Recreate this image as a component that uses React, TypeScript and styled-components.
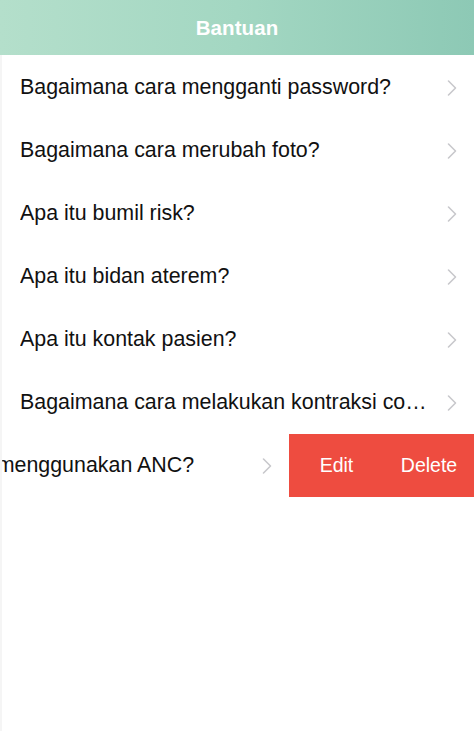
import React from "react";
import styled, { createGlobalStyle } from "styled-components";

const Global = createGlobalStyle`
  html, body { margin: 0; padding: 0; background: #ffffff; }
  body { font-family: "Liberation Sans", Arial, Helvetica, sans-serif; }
  * { box-sizing: border-box; }
`;

const Screen = styled.div`
  width: 474px;
  height: 731px;
  display: flex;
  flex-direction: column;
  background: #ffffff;
  overflow: hidden;
`;

const Header = styled.div`
  height: 55px;
  flex: 0 0 55px;
  display: flex;
  align-items: center;
  justify-content: center;
  background: linear-gradient(90deg, #b4dfcb 0%, #a3d7c2 50%, #8dc9b5 100%);
`;

const Title = styled.div`
  color: #ffffff;
  font-size: 20.5px;
  font-weight: 700;
  letter-spacing: 0.1px;
`;

const Body = styled.div`
  flex: 1;
  padding-top: 1px;
  border-left: 2px solid #f5f5f5;
  display: flex;
  flex-direction: column;
`;

const RowWrap = styled.div`
  position: relative;
  height: 63px;
  overflow: hidden;
`;

const Row = styled.div<{ $shift: number }>`
  height: 63px;
  display: flex;
  align-items: center;
  padding: 0 16px 0 18px;
  background: #ffffff;
  transform: translateX(${(p) => -p.$shift}px);
`;

const Label = styled.div`
  flex: 1;
  min-width: 0;
  font-size: 21.4px;
  color: #111111;
  white-space: nowrap;
  overflow: hidden;
  text-overflow: ellipsis;
  padding-right: 16px;
`;

const Actions = styled.div`
  position: absolute;
  top: 0;
  right: 0;
  height: 63px;
  width: 185px;
  display: flex;
  background: #ee4c40;
`;

const ActionBtn = styled.div<{ $w: number }>`
  width: ${(p) => p.$w}px;
  display: flex;
  align-items: center;
  justify-content: center;
  color: #ffffff;
  font-size: 19.5px;
`;

const Chevron = () => (
  <svg width="12" height="18" viewBox="0 0 12 18" fill="none">
    <path d="M2.5 2 L9.5 9 L2.5 16" stroke="#c8c8cc" strokeWidth="1.6" strokeLinecap="round" strokeLinejoin="round" />
  </svg>
);

const items = [
  "Bagaimana cara mengganti password?",
  "Bagaimana cara merubah foto?",
  "Apa itu bumil risk?",
  "Apa itu bidan aterem?",
  "Apa itu kontak pasien?",
  "Bagaimana cara melakukan kontraksi contoh?",
  "Bagaimana cara menggunakan ANC?",
];

export default function App() {
  return (
    <>
      <Global />
      <Screen>
        <Header>
          <Title>Bantuan</Title>
        </Header>
        <Body>
          {items.map((t, i) => {
            const swiped = i === items.length - 1;
            return (
              <RowWrap key={i}>
                <Row $shift={swiped ? 185 : 0}>
                  <Label>{t}</Label>
                  <Chevron />
                </Row>
                {swiped && (
                  <Actions>
                    <ActionBtn $w={95}>Edit</ActionBtn>
                    <ActionBtn $w={90}>Delete</ActionBtn>
                  </Actions>
                )}
              </RowWrap>
            );
          })}
        </Body>
      </Screen>
    </>
  );
}
